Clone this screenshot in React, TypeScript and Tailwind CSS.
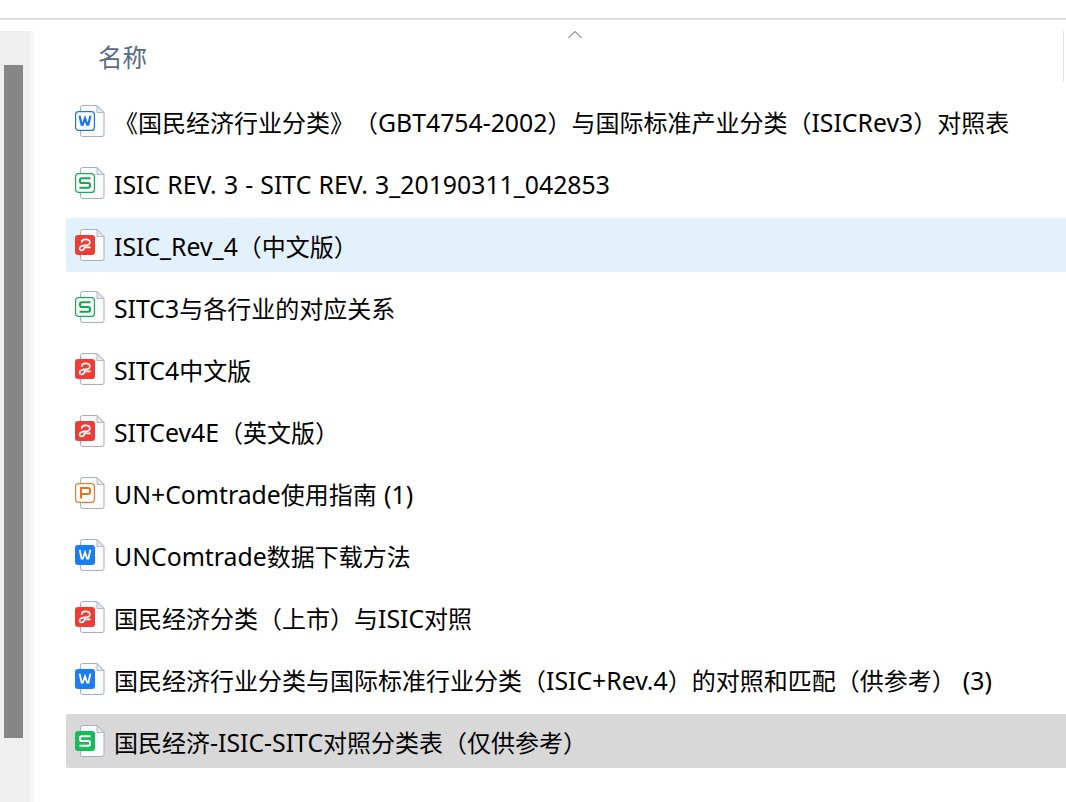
type FileKind = 'word' | 'wordSolid' | 'sheet' | 'sheetSolid' | 'pdf' | 'ppt'

const files: { name: string; kind: FileKind; state?: 'hover' | 'selected' }[] = [
  { name: '《国民经济行业分类》（GBT4754-2002）与国际标准产业分类（ISICRev3）对照表', kind: 'word' },
  { name: 'ISIC REV. 3 - SITC REV. 3_20190311_042853', kind: 'sheet' },
  { name: 'ISIC_Rev_4（中文版）', kind: 'pdf', state: 'hover' },
  { name: 'SITC3与各行业的对应关系', kind: 'sheet' },
  { name: 'SITC4中文版', kind: 'pdf' },
  { name: 'SITCev4E（英文版）', kind: 'pdf' },
  { name: 'UN+Comtrade使用指南 (1)', kind: 'ppt' },
  { name: 'UNComtrade数据下载方法', kind: 'wordSolid' },
  { name: '国民经济分类（上市）与ISIC对照', kind: 'pdf' },
  { name: '国民经济行业分类与国际标准行业分类（ISIC+Rev.4）的对照和匹配（供参考） (3)', kind: 'wordSolid' },
  { name: '国民经济-ISIC-SITC对照分类表（仅供参考）', kind: 'sheetSolid', state: 'selected' },
]

const W_PATH = 'M4.6 10.8 L6.6 19.6 H7.8 L10 13.4 L12.2 19.6 H13.4 L15.4 10.8'
const S_PATH = 'M15.5 11.2 H6.8 Q5 11.2 5 13 V14.2 Q5 16 6.8 16 H13.2 Q15 16 15 17.8 V19 Q15 20.8 13.2 20.8 H4.5'
const P_PATH = 'M6 21.5 V11 H13 Q15 11 15 13 V15 Q15 17 13 17 H6'
const PDF_PATH =
  'M6.6 13.8 C6.6 11.4 8.6 10.4 10.6 10.4 C13 10.4 14.8 11.6 14.8 13.6 C14.8 15.8 12.8 16.4 10.4 16.4 C7 16.4 4.6 17.4 4.6 19.6 C4.6 21 5.8 21.6 7 21.4 C8.6 21.1 9.4 19.8 9.6 18.4 H15.6'

function Badge({ kind }: { kind: FileKind }) {
  switch (kind) {
    case 'word':
      return (
        <g fill="none">
          <rect x="0.6" y="6.6" width="18.8" height="18.8" rx="3" fill="#fff" stroke="#1a73f0" strokeWidth="1.2" />
          <path d={W_PATH} stroke="#1a73f0" strokeWidth="2.2" />
        </g>
      )
    case 'wordSolid':
      return (
        <g fill="none">
          <rect x="0" y="6" width="20" height="20" rx="3" fill="#1a7df5" />
          <path d={W_PATH} stroke="#fff" strokeWidth="1.8" />
        </g>
      )
    case 'sheet':
      return (
        <g fill="none">
          <rect x="0.6" y="6.6" width="18.8" height="18.8" rx="3" fill="#fff" stroke="#12b04f" strokeWidth="1.2" />
          <path d={S_PATH} stroke="#12a84c" strokeWidth="2" />
        </g>
      )
    case 'sheetSolid':
      return (
        <g fill="none">
          <rect x="0" y="6" width="20" height="20" rx="3" fill="#14bd57" />
          <path d={S_PATH} stroke="#fff" strokeWidth="2" />
        </g>
      )
    case 'ppt':
      return (
        <g fill="none">
          <rect x="0.6" y="6.6" width="18.8" height="18.8" rx="3" fill="#fff" stroke="#ee7a2c" strokeWidth="1.2" />
          <path d={P_PATH} stroke="#e9701e" strokeWidth="2" />
        </g>
      )
    default:
      return (
        <g fill="none">
          <rect x="0" y="6" width="20" height="20" rx="3" fill="#ee3d35" />
          <path d={PDF_PATH} stroke="#fff" strokeWidth="1.6" />
        </g>
      )
  }
}

function FileIcon({ kind }: { kind: FileKind }) {
  return (
    <svg width="30" height="32" viewBox="0 0 30 32" className="shrink-0">
      <path
        d="M5.5 2.5 Q5.5 0.5 7.5 0.5 H22 L29 7.5 V29.5 Q29 31.5 27 31.5 H7.5 Q5.5 31.5 5.5 29.5 Z"
        fill="#fbfcff"
        stroke="#a9aeb9"
        strokeWidth="1"
      />
      <path d="M22 0.5 V7.5 H29 Z" fill="#e6e9ef" stroke="#b4b9c3" strokeWidth="1" />
      <Badge kind={kind} />
    </svg>
  )
}

// Latin and CJK runs have different apparent sizes in the reference
function Name({ text }: { text: string }) {
  const parts = text.split(/([\u3000-\u9fff\uff00-\uffef]+)/).filter(Boolean)
  return (
    <>
      {parts.map((p, i) =>
        /^[\u3000-\u9fff\uff00-\uffef]/.test(p) ? (
          <span key={i} className="text-[24px]">{p}</span>
        ) : (
          <span key={i} className="text-[24.8px] [word-spacing:0.7px]">{p}</span>
        ),
      )}
    </>
  )
}

function FileRow({ name, kind, state }: (typeof files)[number]) {
  const bg = state === 'hover' ? 'bg-[#e3f1fc]' : state === 'selected' ? 'bg-[#d8d8d8]' : ''
  return (
    <div className={`flex h-[54px] items-center rounded-l-[2px] pl-[8.5px] ${bg}`}>
      <FileIcon kind={kind} />
      <span className="ml-[9.5px] whitespace-pre pt-[3px] text-black [text-spacing-trim:space-all]">
        <Name text={name} />
      </span>
    </div>
  )
}

export default function App() {
  return (
    <div
      className="flex h-[802px] w-[1066px] flex-col overflow-hidden bg-white"
      style={{ fontFamily: '"Noto Sans", "Noto Sans CJK SC", sans-serif' }}
    >
      <div className="h-[20px] shrink-0 border-b-2 border-[#dcdcdc]" />
      <div className="flex min-h-0 flex-1 pt-[11px]">
        {/* scrollbar track */}
        <div className="w-[30px] shrink-0 bg-[#efefef] pl-[4px] pt-[34px]">
          <div className="h-[673px] w-[19px] bg-[#868686]" />
        </div>
        <div className="w-[4px] shrink-0 bg-[#f7f7f7]" />
        <div className="min-w-0 flex-1 pl-[32px]">
          {/* column header */}
          <div className="relative h-[53px]">
            <span className="absolute left-[32px] top-[9px] text-[24.5px] leading-[36px] text-[#5a6a85]">名称</span>
            <svg width="16" height="10" viewBox="0 0 16 10" className="absolute left-[501px] top-[-1px]">
              <path d="M1.5 8 L8 1.5 L14.5 8" fill="none" stroke="#555" strokeWidth="1" />
            </svg>
            <div className="absolute right-[2px] top-0 h-[51px] w-px bg-[#e2e2e2]" />
          </div>
          <div className="flex flex-col gap-[8px] pt-[10px]">
            {files.map((f) => (
              <FileRow key={f.name} {...f} />
            ))}
          </div>
        </div>
      </div>
    </div>
  )
}
